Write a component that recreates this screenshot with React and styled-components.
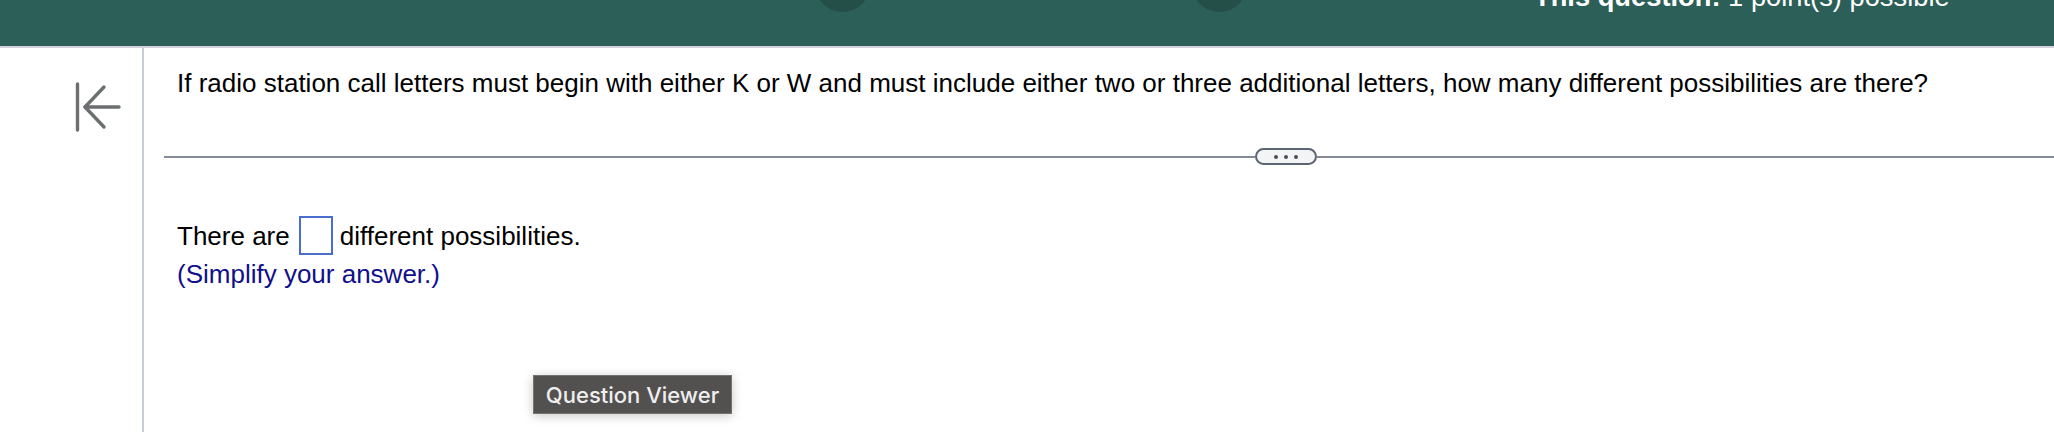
import React from "react";
import styled, { createGlobalStyle } from "styled-components";

const GlobalStyle = createGlobalStyle`
  html, body {
    margin: 0;
    padding: 0;
    background: #ffffff;
  }
  body {
    font-family: "Liberation Sans", Arial, Helvetica, sans-serif;
  }
`;

const Page = styled.div`
  display: flex;
  flex-direction: column;
  height: 100vh;
  min-height: 432px;
  overflow: hidden;
`;

const Header = styled.header`
  flex-shrink: 0;
  height: 46px;
  background: #2b5f57;
  border-bottom: 2px solid #d3d3df;
  overflow: hidden;
`;

const HeaderInner = styled.div`
  display: flex;
  align-items: flex-start;
  height: 90px;
  margin-top: -44px;
`;

const NavCircle = styled.div`
  flex-shrink: 0;
  width: 55px;
  height: 55px;
  margin-top: 1px;
  margin-left: ${(p) => p.$offset}px;
  border-radius: 50%;
  background: #244f49;
`;

const Score = styled.div`
  margin-left: 287px;
  margin-top: 26px;
  color: #ffffff;
  font-size: 27.3px;
  line-height: 30px;
  white-space: nowrap;

  b {
    font-weight: 700;
  }
`;

const Main = styled.div`
  display: flex;
  flex: 1;
`;

const Sidebar = styled.aside`
  flex-shrink: 0;
  box-sizing: border-box;
  width: 144px;
  padding: 34px 0 0 75px;
  border-right: 2px solid #c9ccd9;
`;

const CollapseIcon = styled.svg`
  display: block;
  width: 46px;
  height: 50px;
`;

const Content = styled.main`
  flex: 1;
  padding: 21px 0 0 33px;
`;

const Question = styled.p`
  margin: 0;
  font-size: 26px;
  line-height: 28px;
  color: #000000;
  white-space: nowrap;
`;

const DividerRow = styled.div`
  display: flex;
  align-items: center;
  margin: 51px 0 0 -13px;
  height: 17px;
`;

const Rule = styled.div`
  height: 2px;
  background: #848b96;
  ${(p) => (p.$width ? `width: ${p.$width}px; flex-shrink: 0;` : "flex: 1;")}
`;

const MorePill = styled.button`
  display: flex;
  align-items: center;
  justify-content: center;
  gap: 6px;
  box-sizing: border-box;
  width: 62px;
  height: 17px;
  padding: 0;
  border: 2px solid #5d6573;
  border-radius: 9px;
  background: #f3f4f6;
`;

const Dot = styled.span`
  width: 4px;
  height: 4px;
  border-radius: 50%;
  background: #4a4f58;
`;

const AnswerRow = styled.div`
  display: flex;
  align-items: center;
  margin-top: 51px;
  height: 39px;
  font-size: 26px;
  line-height: 28px;
  color: #000000;
`;

const AnswerBox = styled.input`
  box-sizing: border-box;
  width: 34px;
  height: 39px;
  margin: 0 7px 0 9px;
  padding: 0;
  border: 2px solid #4a6ed0;
  background: #ffffff;
  outline: none;
`;

const Hint = styled.div`
  margin-top: 5px;
  font-size: 26px;
  line-height: 28px;
  color: #10108a;
`;

const ViewerButton = styled.button`
  display: block;
  box-sizing: border-box;
  width: 199px;
  height: 39px;
  margin: 87px 0 0 356px;
  padding: 0;
  border: 1px solid #767472;
  background: #53514f;
  color: #efefef;
  font-family: Inter, "Noto Sans", sans-serif;
  font-size: 22px;
  font-weight: 500;
  box-shadow: 0 2px 10px rgba(0, 0, 0, 0.22);
`;

export default function App() {
  return (
    <>
      <GlobalStyle />
      <Page>
        <Header>
          <HeaderInner>
            <NavCircle $offset={815} />
            <NavCircle $offset={322} />
            <Score>
              <b>This question:</b> 1 point(s) possible
            </Score>
          </HeaderInner>
        </Header>
        <Main>
          <Sidebar>
            <CollapseIcon viewBox="0 0 46 50" fill="none" stroke="#6b6f70" strokeWidth="3.4" strokeLinecap="round" strokeLinejoin="round">
              <line x1="2.5" y1="2" x2="2.5" y2="48" />
              <line x1="10" y1="25" x2="44" y2="25" />
              <polyline points="29,5 10,25 29,45" />
            </CollapseIcon>
          </Sidebar>
          <Content>
            <Question>
              If radio station call letters must begin with either K or W and must include either two or three additional letters, how many different possibilities are there?
            </Question>
            <DividerRow>
              <Rule $width={1091} />
              <MorePill aria-label="more">
                <Dot />
                <Dot />
                <Dot />
              </MorePill>
              <Rule />
            </DividerRow>
            <AnswerRow>
              <span>There are</span>
              <AnswerBox type="text" />
              <span>different possibilities.</span>
            </AnswerRow>
            <Hint>(Simplify your answer.)</Hint>
            <ViewerButton>Question Viewer</ViewerButton>
          </Content>
        </Main>
      </Page>
    </>
  );
}
